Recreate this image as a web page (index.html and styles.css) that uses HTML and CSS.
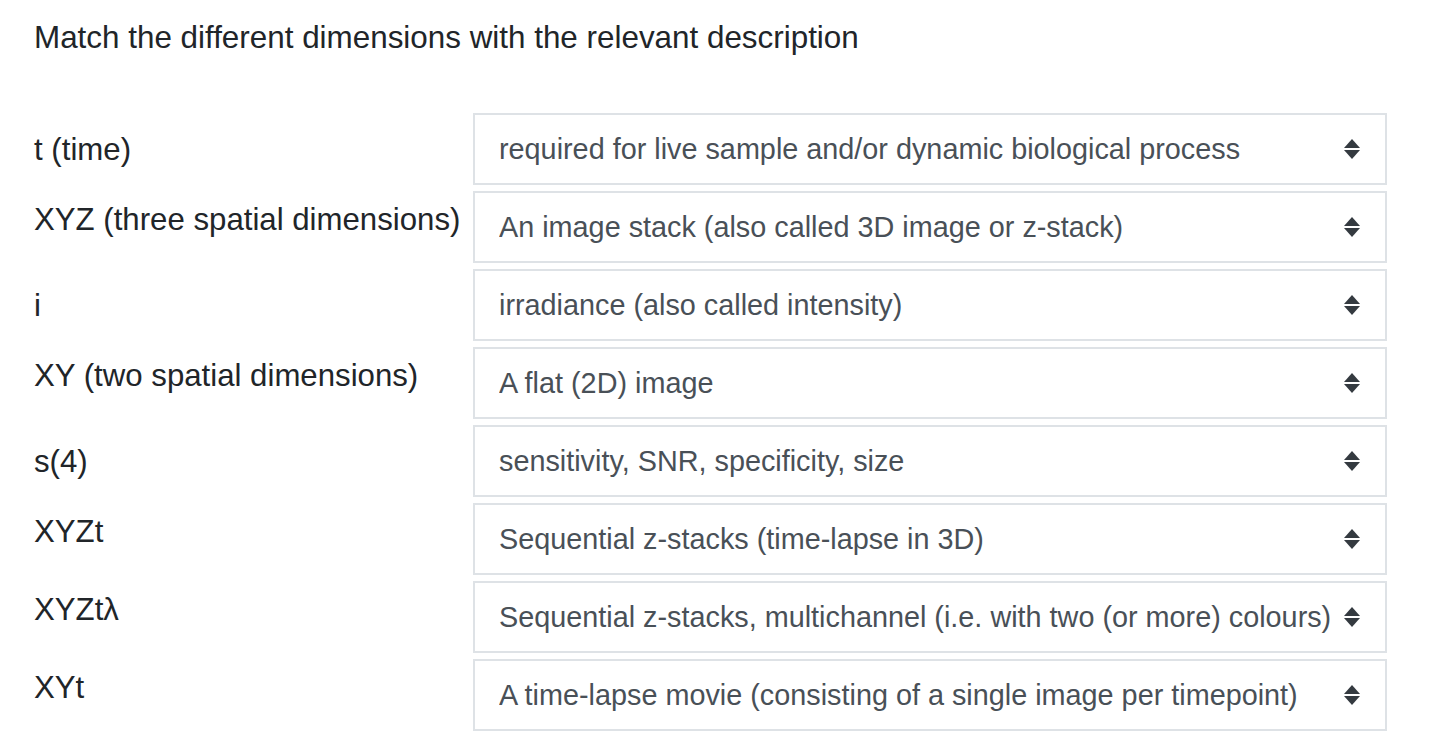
FILE: index.html
```html
<!DOCTYPE html>
<html lang="en">
<head>
<meta charset="utf-8">
<title>Match dimensions</title>
<link rel="stylesheet" href="styles.css">
</head>
<body>
<main class="page">
  <h1 class="title">Match the different dimensions with the relevant description</h1>
  <div class="rows">
    <div class="row"><div class="label pad-a">t (time)</div><div class="select"><span class="value">required for live sample and/or dynamic biological process</span><span class="arrows"></span></div></div>
    <div class="row"><div class="label pad-c">XYZ (three spatial dimensions)</div><div class="select"><span class="value">An image stack (also called 3D image or z-stack)</span><span class="arrows"></span></div></div>
    <div class="row"><div class="label pad-a">i</div><div class="select"><span class="value">irradiance (also called intensity)</span><span class="arrows"></span></div></div>
    <div class="row"><div class="label pad-c">XY (two spatial dimensions)</div><div class="select"><span class="value">A flat (2D) image</span><span class="arrows"></span></div></div>
    <div class="row"><div class="label pad-a">s(4)</div><div class="select"><span class="value">sensitivity, SNR, specificity, size</span><span class="arrows"></span></div></div>
    <div class="row"><div class="label pad-c">XYZt</div><div class="select"><span class="value">Sequential z-stacks (time-lapse in 3D)</span><span class="arrows"></span></div></div>
    <div class="row"><div class="label pad-c">XYZtλ</div><div class="select"><span class="value">Sequential z-stacks, multichannel (i.e. with two (or more) colours)</span><span class="arrows"></span></div></div>
    <div class="row"><div class="label pad-c">XYt</div><div class="select"><span class="value">A time-lapse movie (consisting of a single image per timepoint)</span><span class="arrows"></span></div></div>
  </div>
</main>
</body>
</html>
```

FILE: styles.css
```css
html, body {
  margin: 0;
  padding: 0;
  background: #ffffff;
}
body {
  font-family: "Liberation Sans", Arial, sans-serif;
  color: #212529;
}
.page {
  padding: 20px 45px 0 34px;
}
.title {
  margin: 0 0 57px 0;
  font-size: 31.4px;
  font-weight: 400;
  line-height: normal;
  color: #212529;
}
.rows {
  display: flex;
  flex-direction: column;
  gap: 6px;
}
.row {
  display: flex;
  height: 72px;
}
.label {
  width: 439px;
  flex: none;
  font-size: 31.2px;
  line-height: normal;
  color: #212529;
  white-space: nowrap;
}
.pad-a { padding-top: 19px; }
.pad-c { padding-top: 11px; }
.select {
  flex: 1;
  min-width: 0;
  box-sizing: border-box;
  height: 72px;
  border: 2px solid #dee2e6;
  display: flex;
  align-items: center;
  padding: 0 25px 0 24px;
  font-size: 28.8px;
  color: #495057;
}
.value {
  flex: 1;
  min-width: 0;
  overflow: hidden;
  white-space: nowrap;
  line-height: normal;
}
.arrows {
  flex: none;
  width: 16px;
  height: 20px;
  display: flex;
  flex-direction: column;
  justify-content: space-between;
  margin-left: 10px;
}
.arrows::before,
.arrows::after {
  content: "";
  display: block;
  width: 0;
  height: 0;
  border-left: 8px solid transparent;
  border-right: 8px solid transparent;
}
.arrows::before {
  border-bottom: 9px solid #343a40;
}
.arrows::after {
  border-top: 9px solid #343a40;
}
```
